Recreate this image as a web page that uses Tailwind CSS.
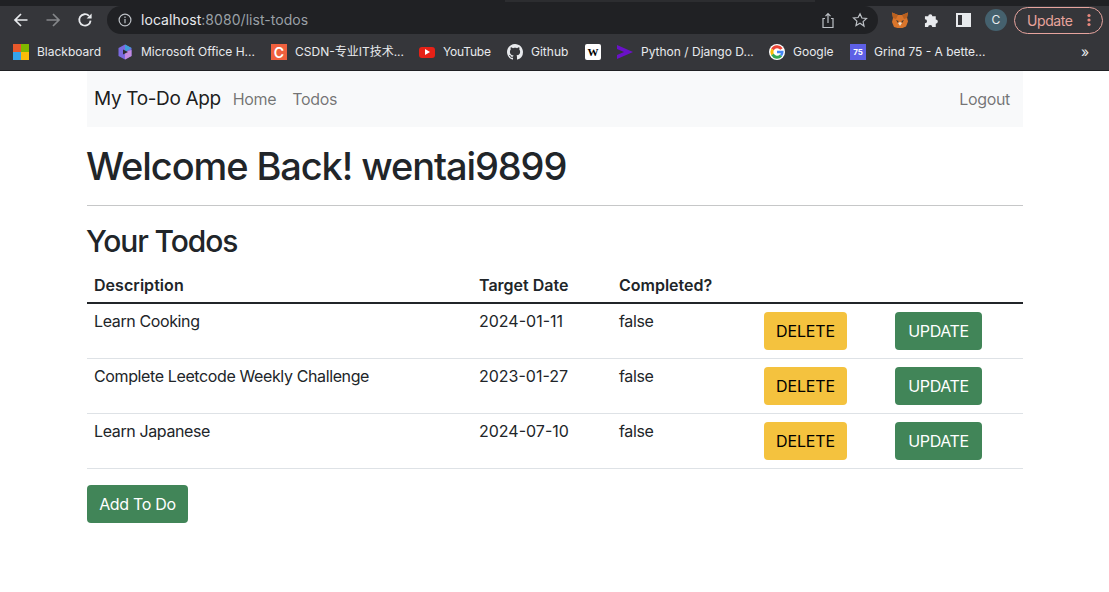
<!DOCTYPE html>
<html lang="en">

<head>
  <meta charset="UTF-8" />
  <meta name="viewport" content="width=device-width, initial-scale=1.0" />
  <script src="https://cdn.jsdelivr.net/npm/@tailwindcss/browser@4"></script>
  <title>List Todos</title>
</head>

<body class="min-h-screen bg-white overflow-hidden font-['Inter','Noto_Sans_CJK_SC',sans-serif] text-[#212529]">

  <!-- browser chrome -->
  <div class="bg-[#35363a] h-[71px] border-b border-[#1f2023]">
    <div class="h-[6px] bg-[#202124]">
      <div class="ml-[505px] w-[310px] h-[2px] bg-[#2c2d30]"></div>
    </div>

    <div class="h-[28px] flex items-center relative">
      <div class="w-[107px] flex items-center pl-[13px] gap-[16px] shrink-0">
        <svg width="16" height="16" viewBox="0 0 16 16" fill="none" stroke="#e8eaed" stroke-width="1.7"><path d="M14.5 8H2M8 2 2 8l6 6" /></svg>
        <svg width="16" height="16" viewBox="0 0 16 16" fill="none" stroke="#85878a" stroke-width="1.7"><path d="M1.5 8H14M8 2l6 6-6 6" /></svg>
        <svg width="16" height="16" viewBox="0 0 16 16" fill="none" stroke="#e8eaed" stroke-width="1.8"><path d="M13.6 8.600A5.700 5.700 0 1 1 12 3.900" /><path d="M14.600 1.400v5h-5" fill="#e8eaed" stroke="none" /></svg>
      </div>
      <div class="w-[771px] h-[28px] rounded-full bg-[#202124] flex items-center pl-[11px] shrink-0">
        <svg width="14" height="14" viewBox="0 0 14 14" fill="none" stroke="#bdc1c6" stroke-width="1.2"><circle cx="7" cy="7" r="5.900" /><path d="M7 6v4.200M7 3.500v1.400" /></svg>
        <span class="ml-[9px] text-[14px] tracking-[0.05px] text-[#e8eaed] -mt-[2px]">localhost<span class="text-[#9aa0a6]">:8080/list-todos</span></span>
        <div class="ml-auto flex items-center gap-[16px] pr-[10px]">
          <svg width="16" height="17" viewBox="0 0 16 17" fill="none" stroke="#bdc1c6" stroke-width="1.2"><path d="M5 6.500H3v9h10v-9h-2M8 11V2M5.500 4.200 8 1.700l2.500 2.500" /></svg>
          <svg width="16" height="16" viewBox="0 0 16 16" fill="none" stroke="#bdc1c6" stroke-width="1.2"><path d="m8 1.800 1.900 4.200 4.600.5-3.400 3.100.9 4.500L8 11.300l-4 2.300.9-4.500-3.400-3.100 4.600-.5z" /></svg>
        </div>
      </div>
      <div class="flex items-center ml-[13px] shrink-0">
        <svg width="18" height="18" viewBox="0 0 18 18"><path d="M1 1.500 7 4h4l6-2.500-1 5 1 4-2 5-3.500 1.500h-5L3 16l-2-5 1-4z" fill="#d9752b" /><path d="M1 1.500 7 4 5 8 2 7zM17 1.500 11 4l2 4 3-1z" fill="#b9601f" /><path d="M5 9l2.500 1L7 12zM13 9l-2.500 1 .5 2z" fill="#3c3a36" /><path d="M7 12l2 3 2-3-2-1z" fill="#eadcc8" /></svg>
        <svg class="ml-[15px]" width="16" height="16" viewBox="0 0 17 17" fill="#e8eaed"><path d="M1 4.500h3.500a2.200 2.200 0 1 1 4.400 0h3.600V8a2.200 2.200 0 1 1 0 4.400V16H8.800a2.200 2.200 0 1 0-4.400 0H1v-4a2.200 2.200 0 1 0 0-4.400z" /></svg>
        <div class="ml-[16px] w-[15px] h-[14px] border-[2px] border-[#e8eaed] flex justify-end"><div class="w-[7px] bg-[#e8eaed]"></div></div>
        <div class="ml-[14px] w-[22px] h-[22px] rounded-full bg-[#45616e] text-[#e8eaed] text-[12px] flex items-center justify-center">C</div>
      </div>
      <div class="ml-[7px] w-[89px] h-[27px] rounded-full border border-[#e6a49e] flex items-center text-[#e8a49c] text-[14px] tracking-[-0.4px] pl-[12px] shrink-0">
        Update
        <svg class="ml-[14px]" width="4" height="14" viewBox="0 0 4 14" fill="#e8897f"><circle cx="2" cy="2.500" r="1.600" /><circle cx="2" cy="7" r="1.600" /><circle cx="2" cy="11.500" r="1.600" /></svg>
      </div>
    </div>

    <div class="h-[36px] flex items-center text-[12px] text-[#e8eaed] whitespace-nowrap relative">
      <div class="flex items-center w-[117px] pl-[13px] shrink-0">
        <div class="w-[16px] h-[16px] grid grid-cols-2 shrink-0">
          <span class="bg-[#e8592b]"></span><span class="bg-[#7fba00]"></span><span class="bg-[#36a4ea]"></span><span class="bg-[#fbbc09]"></span>
        </div>
        <span class="ml-[8px]">Blackboard</span>
      </div>
      <div class="flex items-center w-[154px] shrink-0">
        <svg width="16" height="16" viewBox="0 0 16 16"><path d="M8 .5 14.500 4v8L8 15.500 1.500 12V4z" fill="#7b6ae0" /><path d="M8 .5 14.500 4 8 8z" fill="#3f9fd9" /><path d="M8 15.500 14.500 12V6L8 8z" fill="#c58be0" /><path d="M6 5.500 11 8l-5 2.500z" fill="#2b2c30" /></svg>
        <span class="ml-[8px]">Microsoft Office H...</span>
      </div>
      <div class="flex items-center w-[148px] shrink-0">
        <div class="w-[16px] h-[16px] bg-[#f0603e] text-white text-[14px] font-semibold flex items-center justify-center shrink-0">C</div>
        <span class="ml-[8px]">CSDN-专业IT技术...</span>
      </div>
      <div class="flex items-center w-[88px] shrink-0">
        <div class="w-[16px] h-[11px] bg-[#e62117] rounded-[3px] flex items-center justify-center shrink-0">
          <div class="w-0 h-0 border-y-[3px] border-y-transparent border-l-[5px] border-l-white"></div>
        </div>
        <span class="ml-[8px] tracking-[-0.2px]">YouTube</span>
      </div>
      <div class="flex items-center w-[78px] shrink-0">
        <svg width="16" height="16" viewBox="0 0 16 16" fill="#e8eaed"><path d="M8 0C3.580 0 0 3.580 0 8c0 3.540 2.290 6.530 5.470 7.590.4.070.55-.17.55-.38 0-.19-.01-.82-.01-1.490-2.010.37-2.530-.49-2.690-.94-.09-.23-.48-.94-.82-1.130-.28-.15-.68-.52-.01-.53.630-.01 1.080.58 1.230.82.720 1.210 1.870.87 2.330.66.070-.52.280-.87.510-1.070-1.780-.2-3.640-.89-3.640-3.950 0-.87.310-1.590.820-2.150-.08-.2-.36-1.020.08-2.120 0 0 .67-.21 2.200.82.640-.18 1.320-.27 2-.27s1.360.09 2 .27c1.530-1.040 2.200-.82 2.200-.82.440 1.100.16 1.920.08 2.120.51.560.82 1.270.82 2.150 0 3.070-1.870 3.750-3.650 3.950.29.250.54.730.54 1.480 0 1.070-.01 1.930-.01 2.200 0 .21.150.46.550.38A8.010 8.010 0 0 0 16 8c0-4.420-3.580-8-8-8z" /></svg>
        <span class="ml-[8px]">Github</span>
      </div>
      <div class="flex items-center w-[32px] shrink-0">
        <div class="w-[16px] h-[16px] bg-white rounded-[2px] text-black text-[11px] font-bold flex items-center justify-center font-['Liberation_Serif',serif]">W</div>
      </div>
      <div class="flex items-center w-[152px] shrink-0">
        <svg width="16" height="16" viewBox="0 0 16 16"><path d="M0 1l16 7-16 7v-4l7-3-7-3z" fill="#6a11c9" /></svg>
        <span class="ml-[8px]">Python / Django D...</span>
      </div>
      <div class="flex items-center w-[81px] shrink-0">
        <svg width="16" height="16" viewBox="0 0 16 16" fill="none" stroke-width="3"><circle cx="8" cy="8" r="8" fill="#fff" stroke="none" /><path d="M12.500 5 A5.300 5.300 0 0 0 3.500 5.500" stroke="#ea4335" /><path d="M3.500 5.500A5.300 5.300 0 0 0 3.500 10.500" stroke="#fbbc05" /><path d="M3.500 10.500A5.300 5.300 0 0 0 12 11.500" stroke="#34a853" /><path d="M12 11.500A5.300 5.300 0 0 0 13.300 8H8" stroke="#4285f4" stroke-width="2.500" /></svg>
        <span class="ml-[8px]">Google</span>
      </div>
      <div class="flex items-center shrink-0">
        <div class="w-[16px] h-[16px] bg-[#5e60e6] text-white text-[8px] font-bold flex items-center justify-center">75</div>
        <span class="ml-[8px]">Grind 75 - A bette...</span>
      </div>
      <span class="absolute left-[1081px] top-[7px] text-[14px]">»</span>
    </div>
  </div>

  <!-- page -->
  <div class="w-[936px] ml-[87px]">
    <nav class="h-[56px] bg-[#f8f9fa] flex items-center pl-[7px] pr-[8px] text-[16px] tracking-[-0.35px] text-black/55">
      <a class="text-[19px] tracking-[-0.35px] text-black/90 mr-[12px]" href="#">My To-Do App</a>
      <a class="mr-[16px]" href="#">Home</a>
      <a href="#">Todos</a>
      <a class="ml-auto mr-[5px]" href="#">Logout</a>
    </nav>

    <h1 class="mt-[15px] -ml-[1px] text-[38px] leading-[48px] font-[550] tracking-[-1.1px]">Welcome Back! wentai9899</h1>
    <hr class="mt-[15px] border-[#c6c7c8]" />
    <h2 class="mt-[16px] -ml-[1px] text-[30px] leading-[38px] font-[550] tracking-[-1.1px]">Your Todos</h2>

    <table class="mt-[8px] w-full table-fixed text-[16px] leading-[24px]">
      <thead>
        <tr class="border-b-2 border-[#212529] font-semibold text-left">
          <th class="w-[384px] pl-[7px] pr-[8px] pt-[5px] pb-[5px] font-semibold tracking-[0.05px]">Description</th>
          <th class="w-[140px] px-[8px] pt-[5px] pb-[5px] font-semibold">Target Date</th>
          <th class="w-[145px] px-[8px] pt-[5px] pb-[5px] font-semibold">Completed?</th>
          <th class="w-[131px]"></th>
          <th></th>
        </tr>
      </thead>
      <tbody>
        <tr class="border-b border-[#dee2e6] align-top">
          <td class="pl-[7px] pr-[8px] pt-[5px] tracking-[-0.38px]">Learn Cooking</td>
          <td class="px-[8px] pt-[5px]">2024-01-11</td>
          <td class="px-[8px] pt-[5px] tracking-[-0.38px]">false</td>
          <td class="p-[8px]"><a class="inline-block w-[83px] h-[38px] leading-[38px] text-center rounded-[4px] bg-[#f4c23e] text-black tracking-[-0.15px]" href="#">DELETE</a></td>
          <td class="p-[8px]"><a class="inline-block w-[87px] h-[38px] leading-[38px] text-center rounded-[4px] bg-[#418558] text-white tracking-[-0.4px]" href="#">UPDATE</a></td>
        </tr>
        <tr class="border-b border-[#dee2e6] align-top">
          <td class="pl-[7px] pr-[8px] pt-[5px] tracking-[-0.38px]">Complete Leetcode Weekly Challenge</td>
          <td class="px-[8px] pt-[5px]">2023-01-27</td>
          <td class="px-[8px] pt-[5px] tracking-[-0.38px]">false</td>
          <td class="p-[8px]"><a class="inline-block w-[83px] h-[38px] leading-[38px] text-center rounded-[4px] bg-[#f4c23e] text-black tracking-[-0.15px]" href="#">DELETE</a></td>
          <td class="p-[8px]"><a class="inline-block w-[87px] h-[38px] leading-[38px] text-center rounded-[4px] bg-[#418558] text-white tracking-[-0.4px]" href="#">UPDATE</a></td>
        </tr>
        <tr class="border-b border-[#dee2e6] align-top">
          <td class="pl-[7px] pr-[8px] pt-[5px] tracking-[-0.38px]">Learn Japanese</td>
          <td class="px-[8px] pt-[5px]">2024-07-10</td>
          <td class="px-[8px] pt-[5px] tracking-[-0.38px]">false</td>
          <td class="p-[8px]"><a class="inline-block w-[83px] h-[38px] leading-[38px] text-center rounded-[4px] bg-[#f4c23e] text-black tracking-[-0.15px]" href="#">DELETE</a></td>
          <td class="p-[8px]"><a class="inline-block w-[87px] h-[38px] leading-[38px] text-center rounded-[4px] bg-[#418558] text-white tracking-[-0.4px]" href="#">UPDATE</a></td>
        </tr>
      </tbody>
    </table>

    <a class="mt-[16px] block w-[101px] h-[38px] leading-[38px] text-center rounded-[4px] bg-[#418558] text-white text-[16px] tracking-[-0.3px]" href="#">Add To Do</a>
  </div>

</body>

</html>
